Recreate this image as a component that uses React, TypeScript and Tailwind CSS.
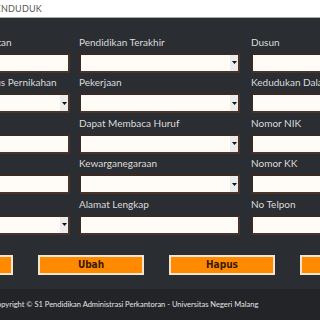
import React from 'react';

type Field = { label: string; select?: boolean };

const col1: Field[] = [
  { label: 'Jabatan' },
  { label: 'Status Pernikahan', select: true },
  { label: 'RT' },
  { label: 'RW' },
  { label: 'JK', select: true },
];

const col2: Field[] = [
  { label: 'Pendidikan Terakhir', select: true },
  { label: 'Pekerjaan', select: true },
  { label: 'Dapat Membaca Huruf', select: true },
  { label: 'Kewarganegaraan', select: true },
  { label: 'Alamat Lengkap' },
];

const col3: Field[] = [
  { label: 'Dusun' },
  { label: 'Kedudukan Dalam Keluarga' },
  { label: 'Nomor NIK' },
  { label: 'Nomor KK' },
  { label: 'No Telpon' },
];

const Input = ({ select }: { select?: boolean }) => (
  <div className="h-[20px] flex bg-[#fffcf8] border-2 border-[#4a3328] border-t-[#3a2a22] border-l-[#3a2a22]">
    <div className="flex-1" />
    {select && (
      <div className="w-[8px] flex items-center justify-center bg-[#ececec]">
        <svg width="5" height="3" viewBox="0 0 5 3">
          <path d="M0 0H5L2.5 3Z" fill="#111" />
        </svg>
      </div>
    )}
  </div>
);

const Column = ({ fields, width }: { fields: Field[]; width: string }) => (
  <div className={`${width} shrink-0 flex flex-col`}>
    {fields.map((f) => (
      <div key={f.label} className="flex flex-col">
        <div className="h-[20.5px] flex items-center text-[10px] text-[#dcdcdc] whitespace-nowrap">
          {f.label}
        </div>
        <Input select={f.select} />
      </div>
    ))}
  </div>
);

const Button = ({ label }: { label: string }) => (
  <div className="w-[106px] h-[20px] shrink-0 flex items-center justify-center bg-[#ff8a00] border-2 border-[#f3e4cf] text-[10px] font-bold text-[#3a1a08] [font-family:'DejaVu_Sans_Condensed','DejaVu_Sans',sans-serif]">
    {label}
  </div>
);

export default function App() {
  return (
    <div className="w-[320px] h-[320px] overflow-hidden bg-white flex flex-col [font-family:Lato,'Open_Sans',sans-serif]">
      <div className="h-[18px] shrink-0 flex items-center border-b border-[#a8a8a8]">
        <span className="-ml-[10px] text-[9px] text-[#555] tracking-[0.2px] whitespace-nowrap">PENDUDUK</span>
      </div>
      <div className="bg-[#2a2d32] pt-[14px] shrink-0">
        <div className="flex -ml-[22px]">
          <Column fields={col1} width="w-[92px]" />
          <div className="w-[9px] shrink-0" />
          <Column fields={col2} width="w-[161px]" />
          <div className="w-[11px] shrink-0" />
          <Column fields={col3} width="w-[161px]" />
        </div>
        <div className="flex gap-[25px] -ml-[93px] pt-[20px] pb-[14px]">
          <Button label="Simpan" />
          <Button label="Ubah" />
          <Button label="Hapus" />
          <Button label="Batal" />
        </div>
      </div>
      <div className="flex-1 bg-[#222428] pt-[10px]">
        <div className="-ml-[8px] text-[7.5px] text-[#e4e4e4] whitespace-nowrap">
          Copyright © S1 Pendidikan Administrasi Perkantoran - Universitas Negeri Malang
        </div>
      </div>
    </div>
  );
}
